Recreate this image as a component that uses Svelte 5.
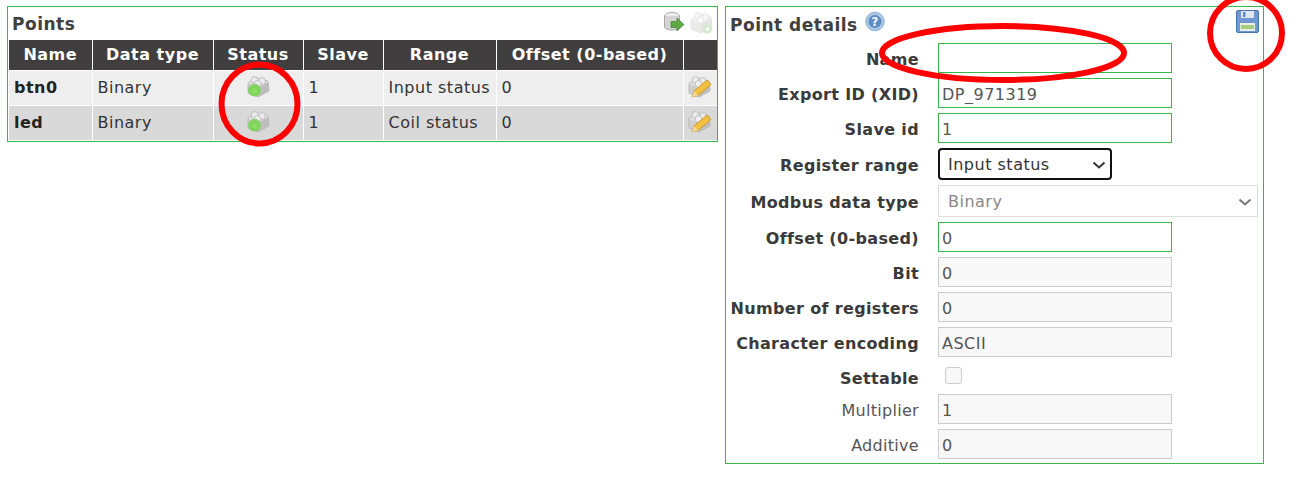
<script>
  const columns = ['Name', 'Data type', 'Status', 'Slave', 'Range', 'Offset (0-based)', ''];
  const points = [
    { name: 'btn0', type: 'Binary', slave: 1, range: 'Input status', offset: 0 },
    { name: 'led', type: 'Binary', slave: 1, range: 'Coil status', offset: 0 },
  ];

  const topFields = [
    { label: 'Name', value: '' },
    { label: 'Export ID (XID)', value: 'DP_971319' },
    { label: 'Slave id', value: '1' },
  ];
  const bottomFields = [
    { label: 'Bit', value: '0' },
    { label: 'Number of registers', value: '0' },
    { label: 'Character encoding', value: 'ASCII' },
  ];
  const lightFields = [
    { label: 'Multiplier', value: '1' },
    { label: 'Additive', value: '0' },
  ];
</script>

<svelte:head><title>Points</title></svelte:head>

{#snippet brick()}
  <path d="M1 8 L10 3 L21 6 L22 16 L11 22 L1 18 Z" fill="#cfcfcf" stroke="#b0b0b0" stroke-width=".8" />
  <path d="M1 8.5 L11 13 L21.5 7 L10 3 Z" fill="#e2e2e2" />
  <path d="M11 13 L21.5 7 L22 16 L11 22 Z" fill="#bdbdbd" />
  <circle cx="7.5" cy="5" r="3.4" fill="#ececec" stroke="#adadad" stroke-width=".7" />
  <circle cx="15" cy="6" r="3.4" fill="#ececec" stroke="#adadad" stroke-width=".7" />
  <circle cx="10.5" cy="9" r="3.4" fill="#f0f0f0" stroke="#adadad" stroke-width=".7" />
{/snippet}

<div class="page">
  <section class="panel points">
    <header class="points-head">
      <h2>Points</h2>
      <div class="tools">
        <svg class="soft" width="22" height="22" viewBox="0 0 22 22">
          <ellipse cx="9" cy="5" rx="7.5" ry="3.6" fill="#ececec" stroke="#a9a9a9" />
          <path d="M1.5 5 V16 C1.5 20 16.5 20 16.5 16 V5" fill="#d4d4d4" stroke="#a9a9a9" />
          <path d="M8 10.5 H14 V7 L21 13.5 L14 20 V16.5 H8 Z" fill="#5fa845" stroke="#3f8430" stroke-width=".7" />
        </svg>
        <svg class="faded soft" width="23" height="23" viewBox="0 0 23 23">
          {@render brick()}
          <circle cx="17.5" cy="18" r="4.5" fill="#8fc77e" />
          <path d="M17.5 15.5 V20.5 M15 18 H20" stroke="#fff" stroke-width="1.4" />
        </svg>
      </div>
    </header>
    <table>
      <thead>
        <tr>
          {#each columns as col}
            <th>{col}</th>
          {/each}
        </tr>
      </thead>
      <tbody>
        {#each points as p}
          <tr>
            <td class="name">{p.name}</td>
            <td>{p.type}</td>
            <td class="icon-cell">
              <svg class="soft" width="23" height="23" viewBox="0 0 23 23">
                <defs>
                  <radialGradient id="led-glow" cx="50%" cy="60%" r="55%">
                    <stop offset="0%" stop-color="#8fe066" />
                    <stop offset="70%" stop-color="#7cd257" />
                    <stop offset="100%" stop-color="#9ccf86" />
                  </radialGradient>
                </defs>
                {@render brick()}
                <circle cx="7.5" cy="15" r="6.5" fill="url(#led-glow)" />
              </svg>
            </td>
            <td>{p.slave}</td>
            <td>{p.range}</td>
            <td>{p.offset}</td>
            <td class="icon-cell">
              <svg class="soft" width="24" height="23" viewBox="0 0 24 23">
                {@render brick()}
                <path d="M4 22 L6 16 L19 5 L23 9.5 L10 20.5 Z" fill="#f2c13f" stroke="#c98a1e" stroke-width=".8" />
                <path d="M4 22 L6 16 L10 20.5 Z" fill="#f3d9a6" />
              </svg>
            </td>
          </tr>
        {/each}
      </tbody>
    </table>
  </section>

  <section class="panel details">
    <header class="details-head">
      <h2>Point details</h2>
      <svg class="help soft" width="20" height="21" viewBox="0 0 20 20">
        <circle cx="10" cy="10" r="9.3" fill="#a9c6e6" stroke="#8fb0d6" />
        <circle cx="10" cy="10" r="6.5" fill="#5c8cc4" />
        <text x="10" y="14.5" text-anchor="middle" class="help-mark">?</text>
      </svg>
      <svg class="save soft" width="23" height="23" viewBox="0 0 23 23">
        <rect x=".5" y=".5" width="22" height="22" rx="1.5" fill="#6f97d2" stroke="#4a72ad" />
        <rect x="5" y="1" width="13" height="7" fill="#dfe7f3" />
        <rect x="7" y="2" width="2.5" height="5" fill="#5f88c4" />
        <rect x="4" y="13" width="15" height="8" fill="#e9efe2" />
        <rect x="5" y="15" width="13" height="4" fill="#a6cc80" />
      </svg>
    </header>

    <div class="form">
      {#each topFields as f}
        <div class="row">
          <span class="label">{f.label}</span>
          <input class="field active" type="text" value={f.value} />
        </div>
      {/each}

      <div class="row tall">
        <span class="label">Register range</span>
        <div class="select-wrap">
          <select class="range">
            <option>Input status</option>
            <option>Coil status</option>
          </select>
          <svg class="chevron" width="14" height="8" viewBox="0 0 14 8">
            <path d="M1.5 1.5 L7 6.5 L12.5 1.5" stroke="#333" />
          </svg>
        </div>
      </div>
      <div class="row tall">
        <span class="label">Modbus data type</span>
        <div class="select-wrap">
          <select class="wide" disabled>
            <option>Binary</option>
          </select>
          <svg class="chevron" width="14" height="8" viewBox="0 0 14 8">
            <path d="M1.5 1.5 L7 6.5 L12.5 1.5" stroke="#777" />
          </svg>
        </div>
      </div>

      <div class="row">
        <span class="label">Offset (0-based)</span>
        <input class="field active" type="text" value="0" />
      </div>

      {#each bottomFields as f}
        <div class="row">
          <span class="label">{f.label}</span>
          <input class="field" type="text" value={f.value} disabled />
        </div>
      {/each}

      <div class="row check-row">
        <span class="label">Settable</span>
        <input class="check" type="checkbox" disabled />
      </div>

      {#each lightFields as f}
        <div class="row">
          <span class="label light">{f.label}</span>
          <input class="field" type="text" value={f.value} disabled />
        </div>
      {/each}
    </div>
  </section>

  <!-- hand-drawn annotations over the screenshot -->
  <svg class="marks" width="1307" height="485" viewBox="0 0 1307 485">
    <ellipse cx="1003" cy="53" rx="121" ry="27" />
    <ellipse cx="259.5" cy="104" rx="38" ry="39.5" />
    <ellipse cx="1246" cy="33" rx="36" ry="36" />
  </svg>
</div>

<style>
  :global(body) {
    margin: 0;
    background: #fff;
    overflow: hidden;
  }
  .page {
    position: relative;
    display: flex;
    align-items: flex-start;
    gap: 7px;
    padding: 6px 0 0 7px;
    font-family: "DejaVu Sans", Verdana, sans-serif;
    font-size: 16px;
    letter-spacing: 0.5px;
    color: #333;
  }
  .panel {
    border: 1px solid #39b54a;
    box-sizing: border-box;
  }
  h2 {
    margin: 0;
    font-size: 17px;
    font-weight: bold;
    color: #404040;
  }
  .soft { filter: blur(0.35px); }

  .points {
    width: 711px;
    height: 136px;
    padding: 0 1px;
  }
  .points-head {
    display: flex;
    justify-content: space-between;
    height: 33px;
    padding: 7px 0 0 3px;
    box-sizing: border-box;
  }
  .tools {
    display: flex;
    gap: 5px;
    margin: 0 3px 0 0;
    align-items: flex-start;
    transform: translateY(-3px);
  }
  .faded { opacity: 0.4; }

  table {
    border-collapse: collapse;
    table-layout: fixed;
    width: 708px;
  }
  th {
    height: 30px;
    padding: 0;
    background: #403e3f;
    color: #fff;
    font-size: 16px;
    font-weight: bold;
    border: 1px solid #fff;
    border-top: 0;
    box-sizing: border-box;
    white-space: nowrap;
  }
  th:nth-child(1) { width: 83px; }
  th:nth-child(2) { width: 121px; }
  th:nth-child(3) { width: 90px; }
  th:nth-child(4) { width: 80px; }
  th:nth-child(5) { width: 113px; }
  th:nth-child(6) { width: 187px; }
  td {
    height: 35px;
    padding: 0 5px;
    color: #333;
    border: 1px solid #fff;
    box-sizing: border-box;
    white-space: nowrap;
  }
  th:first-child, td:first-child { border-left: 0; }
  th:last-child, td:last-child { border-right: 0; }
  tbody tr:nth-child(1) td { background: #eee; }
  tbody tr:nth-child(2) td { background: #d9d9d9; }
  tbody tr:last-child td { border-bottom: 0; }
  .name { font-weight: bold; color: #222; }
  .icon-cell {
    padding: 0 0 2px;
    text-align: center;
    line-height: 0;
  }

  .details {
    width: 539px;
    height: 458px;
    padding: 0 5px 0 4px;
  }
  .details-head {
    position: relative;
    display: flex;
    align-items: flex-start;
    gap: 7px;
    height: 36px;
    padding-top: 8px;
    box-sizing: border-box;
  }
  .help { margin-top: -4px; }
  .save {
    position: absolute;
    right: -1px;
    top: 3px;
  }

  .form {
    display: flex;
    flex-direction: column;
    gap: 5px;
  }
  .row {
    display: flex;
    align-items: center;
    gap: 19px;
    height: 30px;
  }
  .row.tall { height: 32px; }
  .label {
    width: 189px;
    flex: none;
    padding-top: 2px;
    text-align: right;
    font-weight: bold;
    letter-spacing: 0.35px;
    color: #3a3a3a;
    white-space: nowrap;
  }
  .label.light {
    font-weight: normal;
    letter-spacing: 0.3px;
    color: #555;
  }

  .field {
    width: 234px;
    height: 30px;
    box-sizing: border-box;
    padding: 2px 3px 0;
    border: 1px solid #ccc;
    border-radius: 0;
    background: #f8f8f8;
    font: inherit;
    letter-spacing: inherit;
    color: #555;
    opacity: 1;
  }
  .field.active {
    border-color: #39b54a;
    background: #fff;
  }

  .select-wrap {
    position: relative;
    display: flex;
  }
  select {
    appearance: none;
    height: 32px;
    box-sizing: border-box;
    padding: 1px 4px 0;
    font: inherit;
    letter-spacing: inherit;
    background: #fff;
  }
  .range {
    width: 174px;
    padding-left: 8px;
    border: 2px solid #111;
    border-radius: 4px;
    color: #333;
  }
  .wide {
    width: 320px;
    padding-left: 9px;
    border: 1px solid #ddd;
    border-radius: 0;
    color: #888;
    opacity: 1;
  }
  .chevron {
    position: absolute;
    right: 6px;
    top: 13px;
    pointer-events: none;
  }
  .chevron path {
    fill: none;
    stroke-width: 2;
  }

  .check-row { height: 27px; }
  .check-row .label { padding-top: 5px; }
  .check {
    width: 17px;
    height: 17px;
    margin: 0 0 0 7px;
    appearance: none;
    border: 1px solid #ccc;
    border-radius: 3px;
    background: #f8f8f8;
  }

  .help-mark {
    font-family: "DejaVu Sans", sans-serif;
    font-size: 12px;
    font-weight: bold;
    letter-spacing: 0;
    fill: #fff;
  }
  .marks {
    position: absolute;
    left: 0;
    top: 0;
    pointer-events: none;
  }
  .marks ellipse {
    fill: none;
    stroke: #ff0000;
    stroke-width: 6;
  }
</style>
